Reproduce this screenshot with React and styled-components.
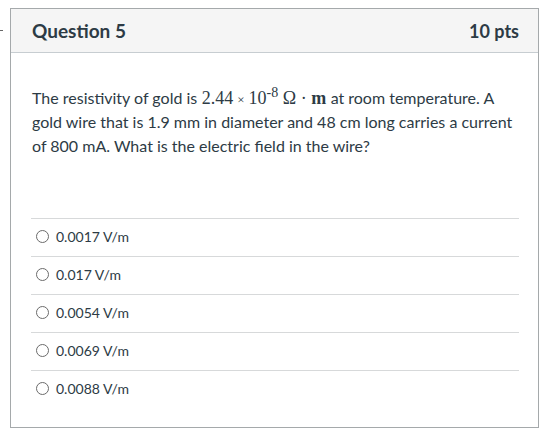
import React from "react";
import styled, { createGlobalStyle } from "styled-components";

const Global = createGlobalStyle`
  html, body { margin: 0; padding: 0; background: #fff; }
  body { font-family: Lato, "Open Sans", sans-serif; color: #2d3b45; }
`;

const Page = styled.div`
  position: relative;
  padding: 8px 0 0 10px;
`;

const Tick = styled.div`
  position: absolute;
  left: 0;
  top: 30px;
  width: 3px;
  height: 1px;
  background: #666;
`;

const Card = styled.div`
  width: 527px;
  height: 418px;
  border: 1px solid #a5a9ab;
  display: flex;
  flex-direction: column;
`;

const Header = styled.div`
  height: 43px;
  background: #f5f5f5;
  border-bottom: 1px solid #c7cdd1;
  display: flex;
  align-items: center;
  justify-content: space-between;
  padding: 0 19px 0 21px;
`;

const Title = styled.div`
  font-weight: 700;
  font-size: 19px;
  color: #2d3b45;
`;

const Points = styled.div`
  font-weight: 700;
  font-size: 18px;
  color: #2d3b45;
`;

const Body = styled.div`
  padding: 33px 19px 0 21px;
`;

const Question = styled.p`
  margin: 0;
  font-size: 16px;
  line-height: 24px;
  color: #2d3b45;
`;

const Math = styled.span`
  font-family: "Liberation Serif", "DejaVu Serif", serif;
  font-size: 18px;
  line-height: 0;
`;

const Sup = styled.sup`
  font-size: 14px;
  line-height: 0;
  vertical-align: 0;
  position: relative;
  top: -7px;
`;

const Times = styled.span`
  font-size: 13px;
  margin: 0 4px;
`;

const Answers = styled.div`
  margin: 60px 0 0 -1px;
`;

const Answer = styled.label`
  display: flex;
  align-items: center;
  box-sizing: border-box;
  height: 38px;
  padding: 0 0 2px 5px;
  border-top: 1px solid #d7d9da;
  font-size: 14px;
  color: #2d3b45;
`;

const Radio = styled.span`
  width: 11px;
  height: 11px;
  border: 1px solid #6b6b6b;
  border-radius: 50%;
  margin-right: 7px;
  flex: none;
`;

const answers = ["0.0017 V/m", "0.017 V/m", "0.0054 V/m", "0.0069 V/m", "0.0088 V/m"];

export default function App() {
  return (
    <>
      <Global />
      <Page>
        <Tick />
        <Card>
          <Header>
            <Title>Question 5</Title>
            <Points>10 pts</Points>
          </Header>
          <Body>
            <Question>
              The resistivity of gold is
              <Math>
                {" "}2.44<Times>×</Times>10<Sup>-8</Sup> Ω · <b>m</b>{" "}
              </Math>
              at room temperature. A gold wire that is 1.9 mm in diameter and 48 cm long carries a current of 800 mA. What is the electric field in the wire?
            </Question>
            <Answers>
              {answers.map((a) => (
                <Answer key={a}>
                  <Radio />
                  {a}
                </Answer>
              ))}
            </Answers>
          </Body>
        </Card>
      </Page>
    </>
  );
}
